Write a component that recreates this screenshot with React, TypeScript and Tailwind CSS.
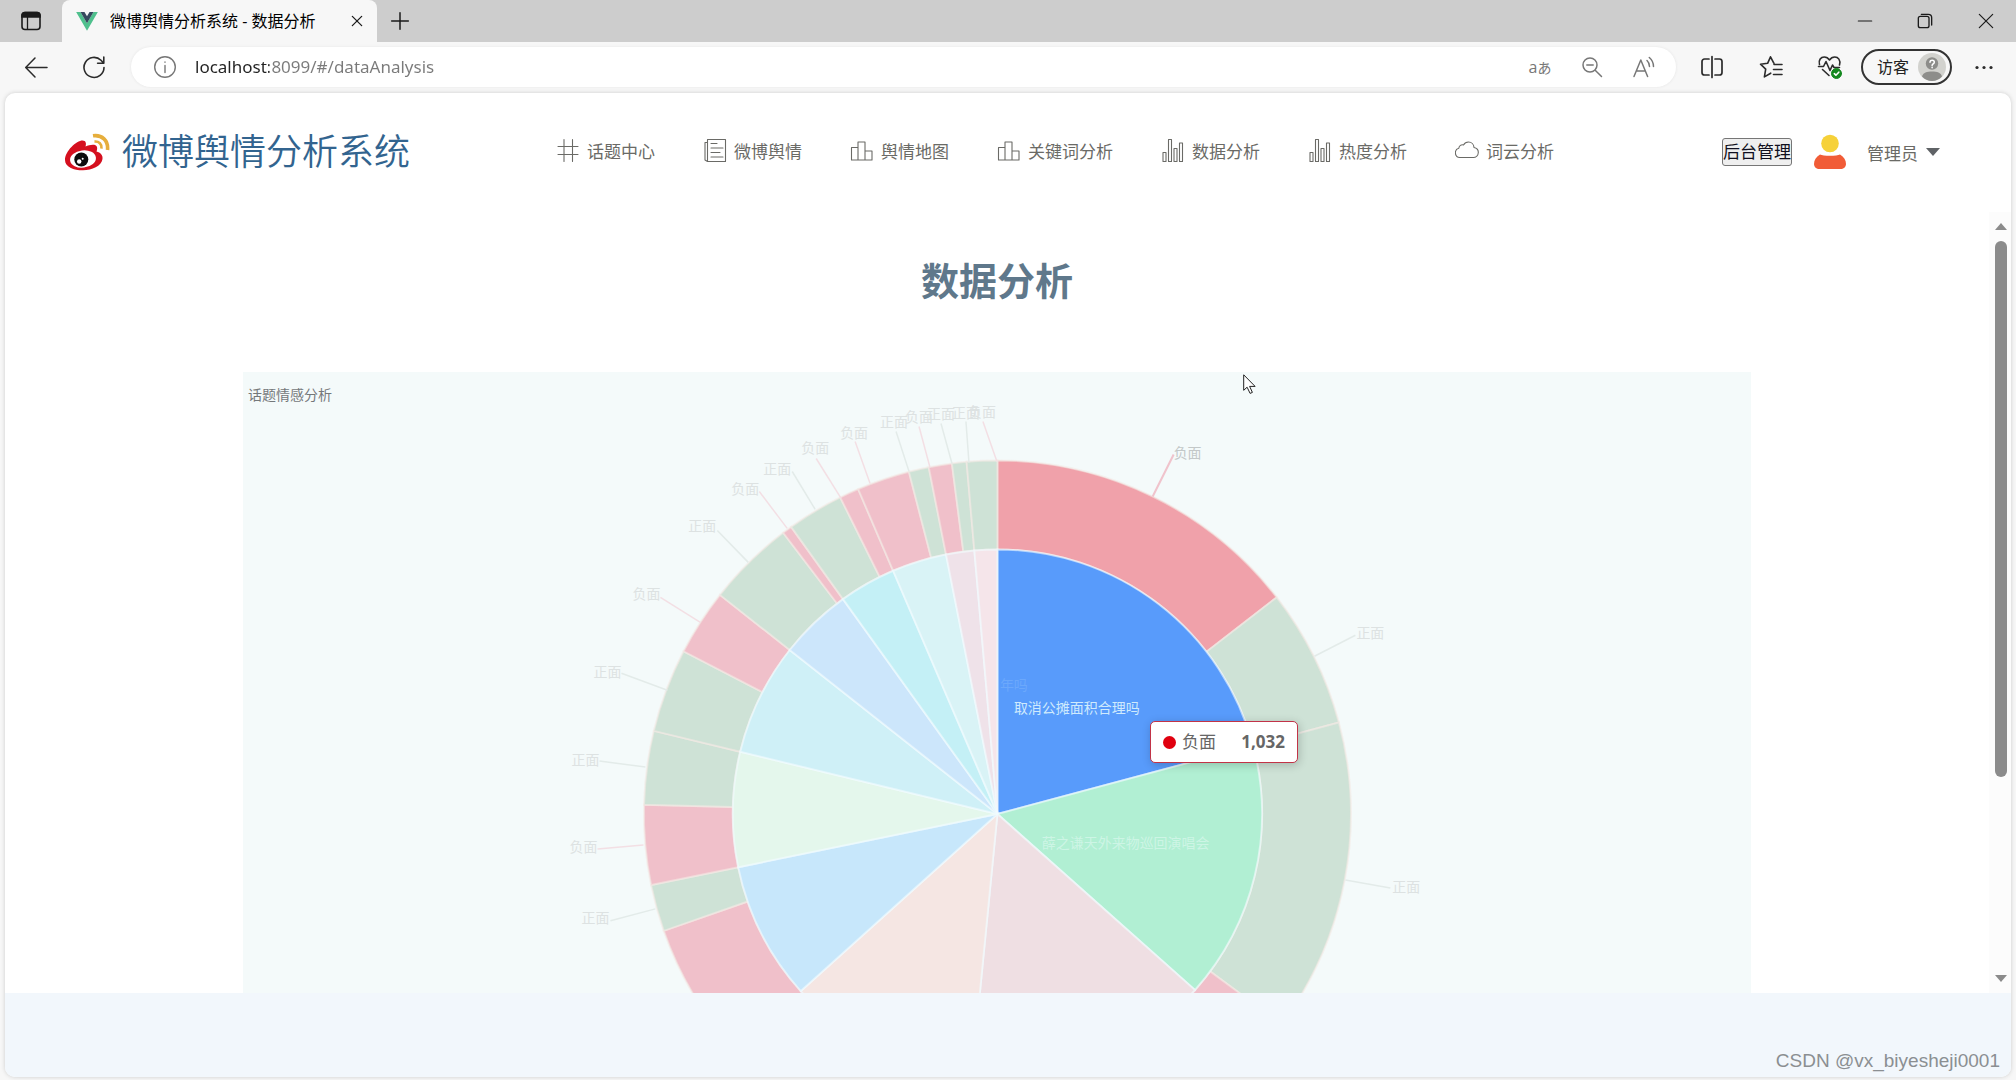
import React from "react";

type Slice = { from: number; to: number; fill: string };

const CX = 997.5;
const CY = 814;
const INNER = 265;
const OUTER = 354;

const topics: Slice[] = [
  { from: 0, to: 75, fill: "#589bfb" },
  { from: 75, to: 131.7, fill: "#b1efd3" },
  { from: 131.7, to: 185.6, fill: "#efdfe3" },
  { from: 185.6, to: 228, fill: "#f5e6e3" },
  { from: 228, to: 258.4, fill: "#c7e7fb" },
  { from: 258.4, to: 283.6, fill: "#e4f7ec" },
  { from: 283.6, to: 308.3, fill: "#cff0f7" },
  { from: 308.3, to: 324.3, fill: "#cce6fb" },
  { from: 324.3, to: 336.8, fill: "#c4f0f6" },
  { from: 336.8, to: 348.8, fill: "#d9f3f6" },
  { from: 348.8, to: 355, fill: "#efe2e9" },
  { from: 355, to: 360, fill: "#f5e5ea" },
];

const RED = "#f0c0ca";
const GREEN = "#cee2d6";

const moods: Slice[] = [
  { from: 0, to: 52.2, fill: "#f0a1aa" },
  { from: 52.2, to: 75, fill: GREEN },
  { from: 75, to: 126.5, fill: GREEN },
  { from: 126.5, to: 160, fill: RED },
  { from: 160, to: 205, fill: GREEN },
  { from: 205, to: 250.7, fill: RED },
  { from: 250.7, to: 258.4, fill: GREEN },
  { from: 258.4, to: 271.5, fill: RED },
  { from: 271.5, to: 283.6, fill: GREEN },
  { from: 283.6, to: 297.4, fill: GREEN },
  { from: 297.4, to: 308.3, fill: RED },
  { from: 308.3, to: 322.7, fill: GREEN },
  { from: 322.7, to: 324.3, fill: RED },
  { from: 324.3, to: 333.6, fill: GREEN },
  { from: 333.6, to: 336.8, fill: RED },
  { from: 336.8, to: 345.5, fill: RED },
  { from: 345.5, to: 348.8, fill: GREEN },
  { from: 348.8, to: 352.6, fill: RED },
  { from: 352.6, to: 355, fill: GREEN },
  { from: 355, to: 360, fill: GREEN },
];

type Label = { t: "正面" | "负面"; x: number; y: number; l: [number, number, number, number]; strong?: boolean };

const labels: Label[] = [
  { t: "负面", x: 1174, y: 452, l: [1153, 496, 1174, 454], strong: true },
  { t: "正面", x: 1357, y: 632, l: [1315, 656, 1356, 635] },
  { t: "正面", x: 1393, y: 887, l: [1346, 880, 1391, 888] },
  { t: "正面", x: 581, y: 918, l: [610, 921, 655, 909] },
  { t: "负面", x: 569, y: 847, l: [597, 849, 643, 845] },
  { t: "正面", x: 571, y: 759, l: [599, 761, 645, 767] },
  { t: "正面", x: 593, y: 671, l: [621, 673, 667, 690] },
  { t: "负面", x: 632, y: 593, l: [660, 597, 700, 622] },
  { t: "正面", x: 688, y: 525, l: [717, 530, 748, 562] },
  { t: "负面", x: 731, y: 488, l: [759, 491, 787, 528] },
  { t: "正面", x: 763, y: 468, l: [792, 471, 815, 509] },
  { t: "负面", x: 801, y: 447, l: [816, 458, 841, 498] },
  { t: "负面", x: 840, y: 432, l: [855, 441, 870, 483] },
  { t: "正面", x: 880, y: 421, l: [896, 431, 909, 471] },
  { t: "负面", x: 905, y: 416, l: [919, 426, 930, 467] },
  { t: "正面", x: 927, y: 413, l: [941, 423, 952, 463] },
  { t: "正面", x: 952, y: 412, l: [966, 421, 969, 462] },
  { t: "负面", x: 968, y: 411, l: [983, 421, 997, 461] },
];

function point(r: number, deg: number) {
  const a = (deg * Math.PI) / 180;
  return `${(CX + r * Math.sin(a)).toFixed(2)} ${(CY - r * Math.cos(a)).toFixed(2)}`;
}

function wedge(s: Slice, r0: number, r1: number) {
  if (r0 === 0) return `M${CX} ${CY}L${point(r1, s.from)}A${r1} ${r1} 0 0 1 ${point(r1, s.to)}Z`;
  return `M${point(r0, s.from)}L${point(r1, s.from)}A${r1} ${r1} 0 0 1 ${point(r1, s.to)}L${point(r0, s.to)}A${r0} ${r0} 0 0 0 ${point(r0, s.from)}Z`;
}

function Icon({ children, className = "size-6", sw = 1.5 }: { children: React.ReactNode; className?: string; sw?: number }) {
  return (
    <svg viewBox="0 0 24 24" fill="none" stroke="currentColor" strokeWidth={sw} strokeLinecap="round" strokeLinejoin="round" className={`shrink-0 ${className}`} aria-hidden="true">
      {children}
    </svg>
  );
}

const hash = <path d="M2 8.5h20M2 16.500h20M8 1.500v22M16.500 1.500v22" />;
const news = <path d="M4.500 1.500h18v22h-18zM4.500 4.500H2v17.500l2.500 1.500M8 5.500h6M8 10h12M8 14.500h9M8 19h12" />;
const rank = <path d="M1.500 9.500h6.500v12.500H1.500zM8 4h7v18H8zM15 13h7v9h-7z" />;
const bars = <path d="M2 14.500h3v9H2zM7.500 1.500h3v22h-3zM13 10.500h3v13h-3zM18.500 5h3v18.500h-3z" />;
const cloud = <path d="M4.700 19.500a4.700 4.700 0 0 1-.9-9.200c.2-2.500 2.500-4.200 4.700-3.400C9.700 4.800 11.500 4 13.500 4c3 0 5.300 2.300 5.500 5.500 2.600.6 4.400 2.600 4.300 5-.1 2.800-2.300 5-5 5z" />;

const nav = [
  { label: "话题中心", icon: hash },
  { label: "微博舆情", icon: news },
  { label: "舆情地图", icon: rank },
  { label: "关键词分析", icon: rank },
  { label: "数据分析", icon: bars },
  { label: "热度分析", icon: bars },
  { label: "词云分析", icon: cloud },
];

function TabStrip() {
  return (
    <div className="flex h-[42px] shrink-0 items-stretch bg-[#cdcdcd] text-[#1b1b1b]">
      <button aria-label="标签页操作" className="flex w-[62px] items-center justify-center">
        <svg viewBox="0 0 20 20" className="size-5" fill="none" stroke="currentColor" strokeWidth="1.6" aria-hidden="true">
          <rect x="1" y="1.500" width="18" height="17" rx="3" />
          <path d="M1 4.500a3 3 0 0 1 3-3h12a3 3 0 0 1 3 3V6H1z" fill="currentColor" />
          <path d="M6.500 6v12.500" strokeWidth="1.300" />
        </svg>
      </button>
      <div className="flex w-[315px] items-center rounded-t-lg bg-[#f7f7f7] pr-3 pl-[14px]">
        <svg viewBox="0 0 24 21" className="h-[19px] w-[22px]" aria-hidden="true">
          <path d="M0 0h4.800L12 12.400 19.200 0H24L12 20.800z" fill="#4fc08d" />
          <path d="M4.800 0h4.400L12 4.800 14.800 0h4.400L12 12.400z" fill="#35495e" />
        </svg>
        <span className="ml-3 flex-1 text-base whitespace-nowrap text-black">微博舆情分析系统 - 数据分析</span>
        <button aria-label="关闭标签页" className="flex size-4 items-center justify-center">
          <Icon className="size-[14px]" sw={2.2}><path d="M4 4l16 16M20 4L4 20" /></Icon>
        </button>
      </div>
      <button aria-label="新建标签页" className="flex w-[46px] items-center justify-center">
        <Icon className="size-5" sw={1.8}><path d="M12 2v20M2 12h20" /></Icon>
      </button>
      <div className="ml-auto flex">
        <button aria-label="最小化" className="flex w-[60px] items-center justify-center">
          <Icon className="size-4" sw={1.8}><path d="M2 12h20" /></Icon>
        </button>
        <button aria-label="还原" className="flex w-[60px] items-center justify-center">
          <Icon className="size-4" sw={2}><path d="M2 8a3 3 0 0 1 3-3h10a3 3 0 0 1 3 3v11a3 3 0 0 1-3 3H5a3 3 0 0 1-3-3zM6.500 2H17a5 5 0 0 1 5 5v11" /></Icon>
        </button>
        <button aria-label="关闭" className="flex w-[61px] items-center justify-center">
          <Icon className="size-4" sw={1.8}><path d="M2 2l20 20M22 2L2 22" /></Icon>
        </button>
      </div>
    </div>
  );
}

function Toolbar() {
  return (
    <div className="flex h-[51px] shrink-0 items-center pb-px text-[#2b2b2b]">
      <button aria-label="后退" className="ml-6 flex w-6 justify-center">
        <Icon sw={1.500}><path d="M23 12.500H2M11 3L1.700 12.500 11 22" /></Icon>
      </button>
      <button aria-label="刷新" className="ml-[34px] flex w-6 justify-center">
        <Icon sw={1.600}><path d="M22 12.500A10 10 0 1 1 19 5.300L21.500 8M21.800 2v6.200h-6.200" /></Icon>
      </button>
      <div className="ml-[25px] flex h-10 flex-1 items-center rounded-full bg-white pr-5 pl-[22px] text-[#777] shadow-[0_0_3px_#e4e4e4]">
        <Icon className="size-6" sw={1.400}><circle cx="12" cy="12" r="10.300" /><path d="M12 10.500v7M12 7v.3" /></Icon>
        <input
          aria-label="地址栏"
          defaultValue="localhost:8099/#/dataAnalysis"
          className="ml-[18px] min-w-0 flex-1 bg-[linear-gradient(90deg,#222_0_74px,#7a7a7a_74px)] bg-clip-text font-['Noto_Sans',sans-serif] text-[17px] text-transparent outline-none"
        />
        <div className="flex items-center gap-7">
          <button aria-label="翻译" className="w-6 text-center text-base leading-6 whitespace-nowrap">
            <span className="text-base">a</span><span className="text-sm">あ</span>
          </button>
          <button aria-label="缩小">
            <Icon className="size-6" sw={1.500}><circle cx="10" cy="10" r="7" /><path d="M6.800 10h6.400M15.200 15.200l6.300 6.300" /></Icon>
          </button>
          <button aria-label="朗读此页">
            <Icon className="size-6" sw={1.500}><path d="M2 21.500L8.800 5l6.800 16.500M4.500 16h8.600M15 5.500a8 8 0 0 1 2.500 6M17.300 2.500a12 12 0 0 1 4.200 9" /></Icon>
          </button>
        </div>
      </div>
      <div className="ml-6 flex items-center">
        <button aria-label="分屏" className="mr-[35px]">
          <Icon className="size-6" sw={1.700}><path d="M9 4H4.500a2.500 2.500 0 0 0-2.500 2.500v11A2.500 2.500 0 0 0 4.500 20H9M15 4h4.500A2.500 2.500 0 0 1 22 6.500v11a2.500 2.500 0 0 1-2.500 2.500H15M12 1.500v21" /></Icon>
        </button>
        <button aria-label="收藏夹" className="mr-[34px]">
          <Icon className="size-6" sw={1.600}><path d="M15 8.200h-.2L11.500 1.800 8.600 8.300 1.500 9.200l5.200 4.900-1.300 7.800 6.300-3.700M15 9.500h8M14.500 14.500h8.500M14.500 19.500h8.500" /></Icon>
        </button>
        <button aria-label="浏览器概要" className="mr-[18px]">
          <svg viewBox="0 0 26 26" className="size-[26px]" fill="none" stroke="currentColor" strokeWidth="1.600" strokeLinecap="round" strokeLinejoin="round" aria-hidden="true">
            <path d="M2.500 10.500C1.200 6 4 3 7.200 3c2.500 0 4.200 1.300 5.300 3 1.100-1.700 2.800-3 5.300-3C21 3 24 6 22.500 11M5.500 15.500l6.500 6" />
            <path d="M1.500 12.500h5l2.500-5 4 9 2.500-5.500 1.500 2.500h5.500" />
            <circle cx="19.500" cy="19.500" r="5" fill="#14881f" stroke="#14881f" strokeWidth="1" />
            <path d="M17.300 19.700l1.600 1.500 2.900-3" stroke="#fff" />
          </svg>
        </button>
        <button className="flex h-9 w-[91px] items-center justify-end gap-[9px] rounded-full border-2 border-[#333] pr-1 text-base text-[#222]">
          访客
          <svg viewBox="0 0 28 28" className="size-7" aria-hidden="true">
            <circle cx="14" cy="14" r="14" fill="#d2d2ce" />
            <path d="M4 23.500c1-4 5-5 10-5s9 1 10 5A14 14 0 0 1 14 28 14 14 0 0 1 4 23.500z" fill="#8d8d8a" />
            <circle cx="14" cy="10.500" r="6.200" fill="#8d8d8a" />
            <path d="M12 9.200c0-2.800 4.300-2.700 4.300 0 0 1.600-2.200 1.700-2.200 3.200M14.100 14.300v.4" fill="none" stroke="#fff" strokeWidth="1.500" strokeLinecap="round" />
          </svg>
        </button>
        <button aria-label="更多" className="mr-5 ml-5">
          <svg viewBox="0 0 24 24" className="size-6" fill="currentColor" aria-hidden="true">
            <circle cx="5" cy="12.500" r="1.600" /><circle cx="12" cy="12.500" r="1.600" /><circle cx="19" cy="12.500" r="1.600" />
          </svg>
        </button>
      </div>
    </div>
  );
}

function WeiboLogo() {
  return (
    <svg viewBox="0 0 46 38" className="h-[38px] w-[46px]" aria-hidden="true">
      <path d="M29 2.800C38 1.500 44.500 7.500 43.500 17" fill="none" stroke="#e6ae3c" strokeWidth="3.600" strokeLinecap="butt" />
      <path d="M30.500 8.600c4.500-.4 7.500 2.400 7 7" fill="none" stroke="#e6ae3c" strokeWidth="2.600" />
      <path d="M1 27C1 18 12.500 7.500 18.500 7.500c3.500 0 4 3 3 6 4-1.800 10.500-3 11.500.5.400 1.500 0 3-.5 4.500 4 1.200 6.500 3.500 6 7.500C37.500 33 28 37.300 19 37.300 9.500 37.300 1 34 1 27z" fill="#d5101f" />
      <ellipse cx="19" cy="26" rx="13" ry="8.600" fill="#fff" transform="rotate(-7 19 26)" />
      <circle cx="17.300" cy="26.500" r="7" fill="#0c0c0c" />
      <circle cx="15.200" cy="28.500" r="2.200" fill="#fff" />
      <circle cx="18.700" cy="25.700" r="1" fill="#fff" />
    </svg>
  );
}

function SiteHeader() {
  return (
    <header className="flex h-[119px] shrink-0 items-center pr-[71px] pb-0.5 pl-[59px]">
      <a href="#/" className="flex items-center gap-3 text-4xl text-[#32648f]">
        <WeiboLogo />
        <span className="font-[350] whitespace-nowrap">微博舆情分析系统</span>
      </a>
      <nav className="ml-[146px] flex items-center gap-12 text-[17px] text-[#6a6a66]">
        {nav.map((n) => (
          <a key={n.label} href="#/dataAnalysis" className="flex items-center gap-[7px] whitespace-nowrap">
            <Icon className="-mt-1 size-6" sw={1.1}>{n.icon}</Icon>
            {n.label}
          </a>
        ))}
      </nav>
      <div className="ml-auto flex items-center">
        <button className="h-7 rounded-[3px] border border-[#767676] bg-[#efefef] text-[17px] leading-6 whitespace-nowrap text-[#101020]">后台管理</button>
        <svg viewBox="0 0 34 36" className="ml-[21px] h-9 w-[34px]" aria-hidden="true">
          <circle cx="17" cy="9.500" r="8.800" fill="#f6d139" />
          <path d="M7 20.500c3 1.700 17 1.700 20 0 4 2.300 6 6 6 9.500 0 3-2.500 5-5.500 5h-21C3.500 35 1 33 1 30c0-3.500 2-7.200 6-9.500z" fill="#f15c37" />
        </svg>
        <button className="ml-5 flex items-center gap-2 pt-1 text-[17px] whitespace-nowrap text-[#6a6a66]">
          管理员
          <svg viewBox="0 0 14 8" className="-mt-1 h-2 w-[14px]" fill="#5f6266" aria-hidden="true"><path d="M0 0h14L7 8z" /></svg>
        </button>
      </div>
    </header>
  );
}

function Sunburst() {
  return (
    <section className="relative mx-auto mt-[62px] w-[76%] bg-[#f4fafa]">
      <svg viewBox="242 372 1510 884" className="h-[884px] w-full" role="img" aria-label="话题情感分析">
        {moods.map((s) => (
          <path key={`m${s.from}`} d={wedge(s, INNER, OUTER)} fill={s.fill} stroke="#f3e9e4" strokeOpacity="0.6" strokeWidth="2" />
        ))}
        {topics.map((s) => (
          <path key={`t${s.from}`} d={wedge(s, 0, INNER)} fill={s.fill} stroke="#f2fbff" strokeOpacity="0.6" strokeWidth="2" />
        ))}
        {labels.map((l, i) => (
          <g key={i}>
            <line x1={l.l[0]} y1={l.l[1]} x2={l.l[2]} y2={l.l[3]} stroke={l.strong ? "#f0c3cc" : l.t === "负面" ? "#f3dfe4" : "#e3ebe9"} strokeWidth={l.strong ? 2 : 1.500} />
            <text x={l.x} y={l.y} dominantBaseline="central" fontSize="14" fill={l.strong ? "#c3c8c8" : "#dde2e2"}>{l.t}</text>
          </g>
        ))}
        <text x="1014" y="707" dominantBaseline="central" fontSize="14" fill="#cfeafd">取消公摊面积合理吗</text>
        <text x="1042" y="843" dominantBaseline="central" fontSize="14" fill="#cdf5e5">薛之谦天外来物巡回演唱会</text>
        <text x="1000" y="684" dominantBaseline="central" fontSize="14" fill="#6ba8fb">年吗</text>
      </svg>
      <h2 className="absolute top-[13px] left-[5px] text-sm text-[#74787a]">话题情感分析</h2>
      <div className="absolute top-[349px] left-1/2 ml-[153px] flex h-[42px] w-[148px] items-center rounded-[5px] border border-[#c23347] bg-white px-3 text-[17px] text-[#666] shadow-[1px_2px_10px_rgba(0,0,0,0.2)]">
        <span className="size-[13px] rounded-full bg-[#e0000f]" />
        <span className="ml-[6px]">负面</span>
        <span className="ml-auto font-bold">1,032</span>
      </div>
      <svg viewBox="0 0 13 20" className="absolute top-[2px] left-1/2 ml-[246px] h-5 w-[13px]" aria-hidden="true">
        <path d="M.7.800v15.500l3.400-3.100 3 6.200 2.300-1-2.800-6h5.500z" fill="#fff" stroke="#222" strokeWidth="1" />
      </svg>
    </section>
  );
}

function Scrollbar() {
  return (
    <div className="flex w-[22px] shrink-0 flex-col items-center bg-[#fcfcfc] py-[11px] pl-0.5" aria-hidden="true">
      <svg viewBox="0 0 12 7" className="h-[7px] w-3" fill="#8b8b8b"><path d="M0 7h12L6 0z" /></svg>
      <div className="mt-[11px] flex w-3 flex-1 flex-col">
        <div className="h-[73%] rounded-full bg-[#8b8b8b]" />
      </div>
      <svg viewBox="0 0 12 7" className="h-[7px] w-3" fill="#8b8b8b"><path d="M0 0h12L6 7z" /></svg>
    </div>
  );
}

export default function App() {
  return (
    <div className="flex h-screen flex-col overflow-hidden bg-[#f7f7f7] font-['Open_Sans','Noto_Sans_CJK_SC',sans-serif]">
      <TabStrip />
      <Toolbar />
      <div className="relative mx-[5px] mb-[3px] flex min-h-0 flex-1 flex-col overflow-hidden rounded-[10px] bg-white shadow-[0_0_4px_#ccc]">
        <SiteHeader />
        <div className="flex min-h-0 flex-1">
          <main className="min-w-0 flex-1 overflow-hidden">
            <h1 className="mt-[38px] text-center text-[38px] leading-[60px] font-bold text-[#5f788b]">数据分析</h1>
            <Sunburst />
          </main>
          <Scrollbar />
        </div>
        <footer className="flex h-[84px] shrink-0 items-end justify-end bg-[#f2f7fc] pr-[11px] pb-0.5">
          <span className="font-['Liberation_Sans',sans-serif] text-[19px] leading-[28px] text-[#8b8f92]">CSDN @vx_biyesheji0001</span>
        </footer>
      </div>
    </div>
  );
}
